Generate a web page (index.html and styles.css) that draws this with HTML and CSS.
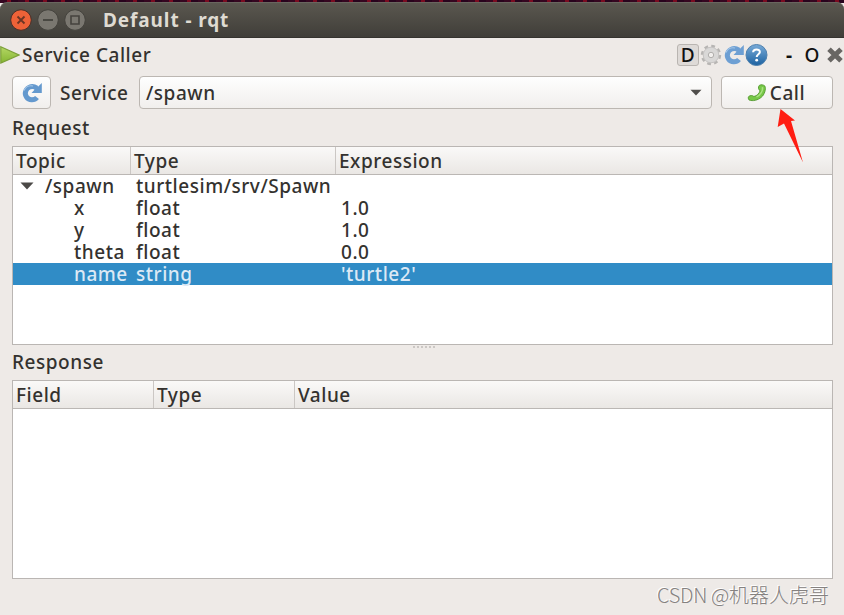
FILE: index.html
```
<!DOCTYPE html>
<html lang="en">
<head>
  <meta charset="utf-8">
  <title>Default - rqt</title>
  <link rel="stylesheet" href="styles.css">
</head>
<body>
  <div class="desktop-strip"></div>
  <div class="titlebar">
    <svg class="window-buttons" width="78" height="22" viewBox="0 0 78 22">
      <circle cx="11" cy="11" r="10.3" fill="#ed6238" stroke="#4a3029"/>
      <path d="M7.5 7.5l7 7m0-7l-7 7" stroke="#6b3524" stroke-width="1.8"/>
      <circle cx="38" cy="11" r="10.3" fill="#7a7770" stroke="#45433e"/>
      <path d="M33 11h10" stroke="#45433e" stroke-width="1.8"/>
      <circle cx="65" cy="11" r="10.3" fill="#7a7770" stroke="#45433e"/>
      <path d="M61 7h8v8h-8z" fill="none" stroke="#45433e" stroke-width="1.6"/>
    </svg>
    <span class="window-title">Default - rqt</span>
  </div>

  <!-- plugin dock title -->
  <div class="dock">
    <svg class="play" width="20" height="20" viewBox="0 0 20 20">
      <defs>
        <linearGradient id="green" x1="0" y1="0" x2="0" y2="1">
          <stop offset="0" stop-color="#b4d765"/>
          <stop offset="1" stop-color="#86b632"/>
        </linearGradient>
        <linearGradient id="blue" x1="0" y1="0" x2="0" y2="1">
          <stop offset="0" stop-color="#79abd8"/>
          <stop offset="1" stop-color="#1d62a1"/>
        </linearGradient>
      </defs>
      <path d="M.8 1.8L19 10 .8 18z" fill="url(#green)" stroke="#7ca038" stroke-width="1.2"/>
    </svg>
    <span class="dock-title">Service Caller</span>
    <div class="dock-tools">
      <button class="d-button">D</button>
      <svg width="22" height="22" viewBox="0 0 22 22">
        <circle cx="11" cy="11" r="8.8" fill="none" stroke="#b7b5b3" stroke-width="2.8" stroke-dasharray="3.7 3.21"/>
        <circle cx="11" cy="11" r="5.4" fill="none" stroke="#d9d8d7" stroke-width="5.4"/>
        <circle cx="11" cy="11" r="7.8" fill="none" stroke="#c0bebc" stroke-width=".8"/>
        <circle cx="11" cy="11" r="2.7" fill="#f1efed" stroke="#b0aeac"/>
      </svg>
      <svg width="23" height="22" viewBox="0 0 23 22">
        <path d="M17 15.500A6.600 6.600 0 1 1 9.800 5Q13 3.500 17 6" fill="none" stroke="#6d9fd3" stroke-width="5"/>
        <path d="M21.8 1v10H11.500l3-3.200-1.500-3.300 5 .3z" fill="#6d9fd3"/>
        <path d="M4 8.500a8 8 0 0 1 9-4.500" fill="none" stroke="#a5c7e8" stroke-width="1.2"/>
      </svg>
      <svg width="23" height="22" viewBox="0 0 23 22">
        <circle cx="11.5" cy="11" r="10.5" fill="url(#blue)" stroke="#4f81ae"/>
        <path d="M8.1 8.2C8.3 4.600 15 4.700 14.900 8.100c0 2.200-3.200 2.200-3.200 4.800" fill="none" stroke="#fff" stroke-width="2"/>
        <circle cx="11.7" cy="16.2" r="1.4" fill="#fff"/>
      </svg>
      <span class="dock-min">-</span>
      <span class="dock-max">O</span>
      <svg width="18" height="18" viewBox="0 0 18 18">
        <path d="M3 3.2l12 11.6M15 3.2L3 14.8" stroke="#686663" stroke-width="5"/>
      </svg>
    </div>
  </div>

  <div class="toolbar">
    <button class="button refresh">
      <svg width="23" height="22" viewBox="0 0 23 22">
        <path d="M17 15.500A6.600 6.600 0 1 1 9.800 5Q13 3.500 17 6" fill="none" stroke="#6499ce" stroke-width="5"/>
        <path d="M21.8 1v10H11.500l3-3.200-1.500-3.300 5 .3z" fill="#6499ce"/>
        <path d="M4 8.500a8 8 0 0 1 9-4.500" fill="none" stroke="#a5c7e8" stroke-width="1.2"/>
      </svg>
    </button>
    <label class="service-label">Service</label>
    <div class="combo">
      <span>/spawn</span>
      <svg width="12" height="7" viewBox="0 0 12 7"><path d="M.5.8h11L6 6.600z" fill="#504e4b"/></svg>
    </div>
    <button class="button call">
      <svg width="20" height="18" viewBox="0 0 20 18">
        <path d="M12.3 1.400c2-1.200 4.200-.6 5.600.7 1.400 3-.5 8.700-3.600 11.200-3.400 2.800-8.500 4.300-12.300 2.600-.9-1.200-1-2.700-.2-3.500 1.300-1 3.600-1.300 5.100.1 3.200-.7 5.200-2.900 6.200-5.700-1.700-.9-2.300-3.900-.8-5.400z" fill="#76c847" stroke="#52982e" stroke-width=".9"/>
        <path d="M15.400 3.200c.8 3.500-1.900 8-5.900 9.700" fill="none" stroke="#a9e281" stroke-width="1.5"/>
      </svg>
      <span>Call</span>
    </button>
    <svg class="arrow" width="26" height="55" viewBox="0 0 26 55">
      <path d="M1.500-1L16 10.500 12 11l12 41.500L5 13.500-1.300 17z" fill="#ff1d12"/>
    </svg>
  </div>

  <h2 class="section-title">Request</h2>
  <div class="tree request">
    <div class="tree-row tree-head">
      <span>Topic</span><span>Type</span><span>Expression</span>
    </div>
    <div class="tree-row root">
      <span><svg class="expander" width="14" height="8" viewBox="0 0 14 8"><path d="M.5.5h13L7 7.500z" fill="#4b4947"/></svg>/spawn</span>
      <span>turtlesim/srv/Spawn</span><span></span>
    </div>
    <div class="tree-row"><span>x</span><span>float</span><span>1.0</span></div>
    <div class="tree-row"><span>y</span><span>float</span><span>1.0</span></div>
    <div class="tree-row"><span>theta</span><span>float</span><span>0.0</span></div>
    <div class="tree-row selected"><span>name</span><span>string</span><span>'turtle2'</span></div>
  </div>

  <div class="splitter"><i></i><i></i><i></i><i></i><i></i><i></i></div>

  <h2 class="section-title">Response</h2>
  <div class="tree response">
    <div class="tree-row tree-head">
      <span>Field</span><span>Type</span><span>Value</span>
    </div>
  </div>

  <div class="statusbar">
    <div class="watermark"><span>CSDN @</span>机器人虎哥</div>
  </div>
</body>
</html>
```
FILE: styles.css
```
* {
  box-sizing: border-box;
}

body {
  margin: 0;
  width: 844px;
  height: 615px;
  overflow: hidden;
  background: #eeeae7;
  color: #34322f;
  font-family: "Noto Sans", "Open Sans", sans-serif;
  font-size: 19px;
  font-weight: 500;
  letter-spacing: 0.53px;
  line-height: 22px;
  display: flex;
  flex-direction: column;
}

button {
  font: inherit;
  color: inherit;
  letter-spacing: inherit;
  padding: 0;
}

svg {
  flex: none;
}

/* window frame */
.desktop-strip {
  height: 3px;
  flex: none;
  background: repeating-linear-gradient(90deg, #350620 0 7px, #7b0b20 7px 11px, #28031d 11px 18px);
  margin-bottom: -1px;
}

.titlebar {
  height: 36px;
  flex: none;
  display: flex;
  align-items: center;
  padding-left: 10px;
  border-radius: 7px 7px 0 0;
  border-top: 1px solid #69665f;
  border-bottom: 1px solid #35332f;
  background: linear-gradient(#5a574f, #403e39);
}

.window-title {
  margin-left: 15px;
  color: #dfdbd2;
  font-weight: 700;
  letter-spacing: 0.9px;
}

.dock {
  height: 34px;
  flex: none;
  display: flex;
  align-items: center;
}

.dock-title {
  margin-left: 2px;
}

.dock-tools {
  margin-left: auto;
  display: flex;
  align-items: center;
}

.d-button {
  width: 22px;
  height: 22px;
  border: 1px solid #b9b5b1;
  border-radius: 3px;
  background: #dedad7;
  line-height: 20px;
  color: #111;
  margin-right: 1px;
}

.dock-min {
  margin-left: 18px;
  color: #111;
  font-weight: 700;
}

.dock-max {
  margin: 0 6px 0 12px;
  color: #111;
}

/* service selection */
.toolbar {
  position: relative;
  height: 44px;
  flex: none;
  display: flex;
  align-items: flex-start;
  padding: 4px 11px 0 12px;
}

.button,
.combo {
  height: 33px;
  border: 1px solid #bcb7b2;
  border-radius: 4px;
  background: linear-gradient(#fefefe, #f1efed);
  display: flex;
  align-items: center;
}

.refresh {
  width: 39px;
  justify-content: center;
}

.service-label {
  margin: 6px 0 0 9px;
  width: 79px;
}

.combo {
  width: 573px;
  justify-content: space-between;
  padding: 0 9px 0 6px;
}

.call {
  margin-left: 9px;
  width: 112px;
  justify-content: center;
  gap: 3px;
  padding-right: 2px;
}

.arrow {
  position: absolute;
  left: 779px;
  top: 38px;
  overflow: visible;
}

.section-title {
  margin: 0 0 0 12px;
  padding-top: 1px;
  height: 30px;
  flex: none;
  font-size: 19px;
  font-weight: 500;
}

/* tree views */
.tree {
  margin: 0 11px 0 12px;
  flex: none;
  border: 1px solid #bab6b3;
  background: #fff;
}

.request {
  height: 199px;
}

.response {
  height: 199px;
}

.tree-row {
  display: grid;
  height: 22px;
  white-space: nowrap;
}

.request .tree-row {
  grid-template-columns: 118px 205px 1fr;
}

.response .tree-row {
  grid-template-columns: 141px 141px 1fr;
}

.tree-row span {
  padding-left: 5px;
}

.tree-row span:first-child {
  padding-left: 61px;
}

.tree-row.tree-head {
  height: 28px;
  line-height: 28px;
  border-bottom: 1px solid #bbb7b4;
  background: linear-gradient(#faf9f8, #eae7e4);
}

.tree-head span,
.tree-head span:first-child {
  height: 27px;
  padding-left: 3px;
}

.tree-head span:not(:last-child) {
  border-right: 1px solid #cbc7c4;
}

.tree-row.root span:first-child {
  padding-left: 7px;
}

.expander {
  margin-right: 11px;
  vertical-align: 3px;
}

.selected {
  background: #308cc6;
  color: #dce9f5;
}

.splitter {
  height: 5px;
  flex: none;
  display: flex;
  justify-content: center;
  gap: 2px;
  padding: 1px 0 0 4px;
}

.splitter i {
  width: 2px;
  height: 2px;
  background: #cbc7c4;
}

.statusbar {
  flex: 1;
  display: flex;
  justify-content: flex-end;
  padding: 5px 15px 0 0;
}

.watermark {
  font-family: "Noto Sans CJK SC", sans-serif;
  font-size: 20px;
  font-weight: 300;
  letter-spacing: 0;
  color: #858180;
  text-shadow: -1px -1px 0 #fff;
}

.watermark span {
  letter-spacing: -0.3px;
}
```
